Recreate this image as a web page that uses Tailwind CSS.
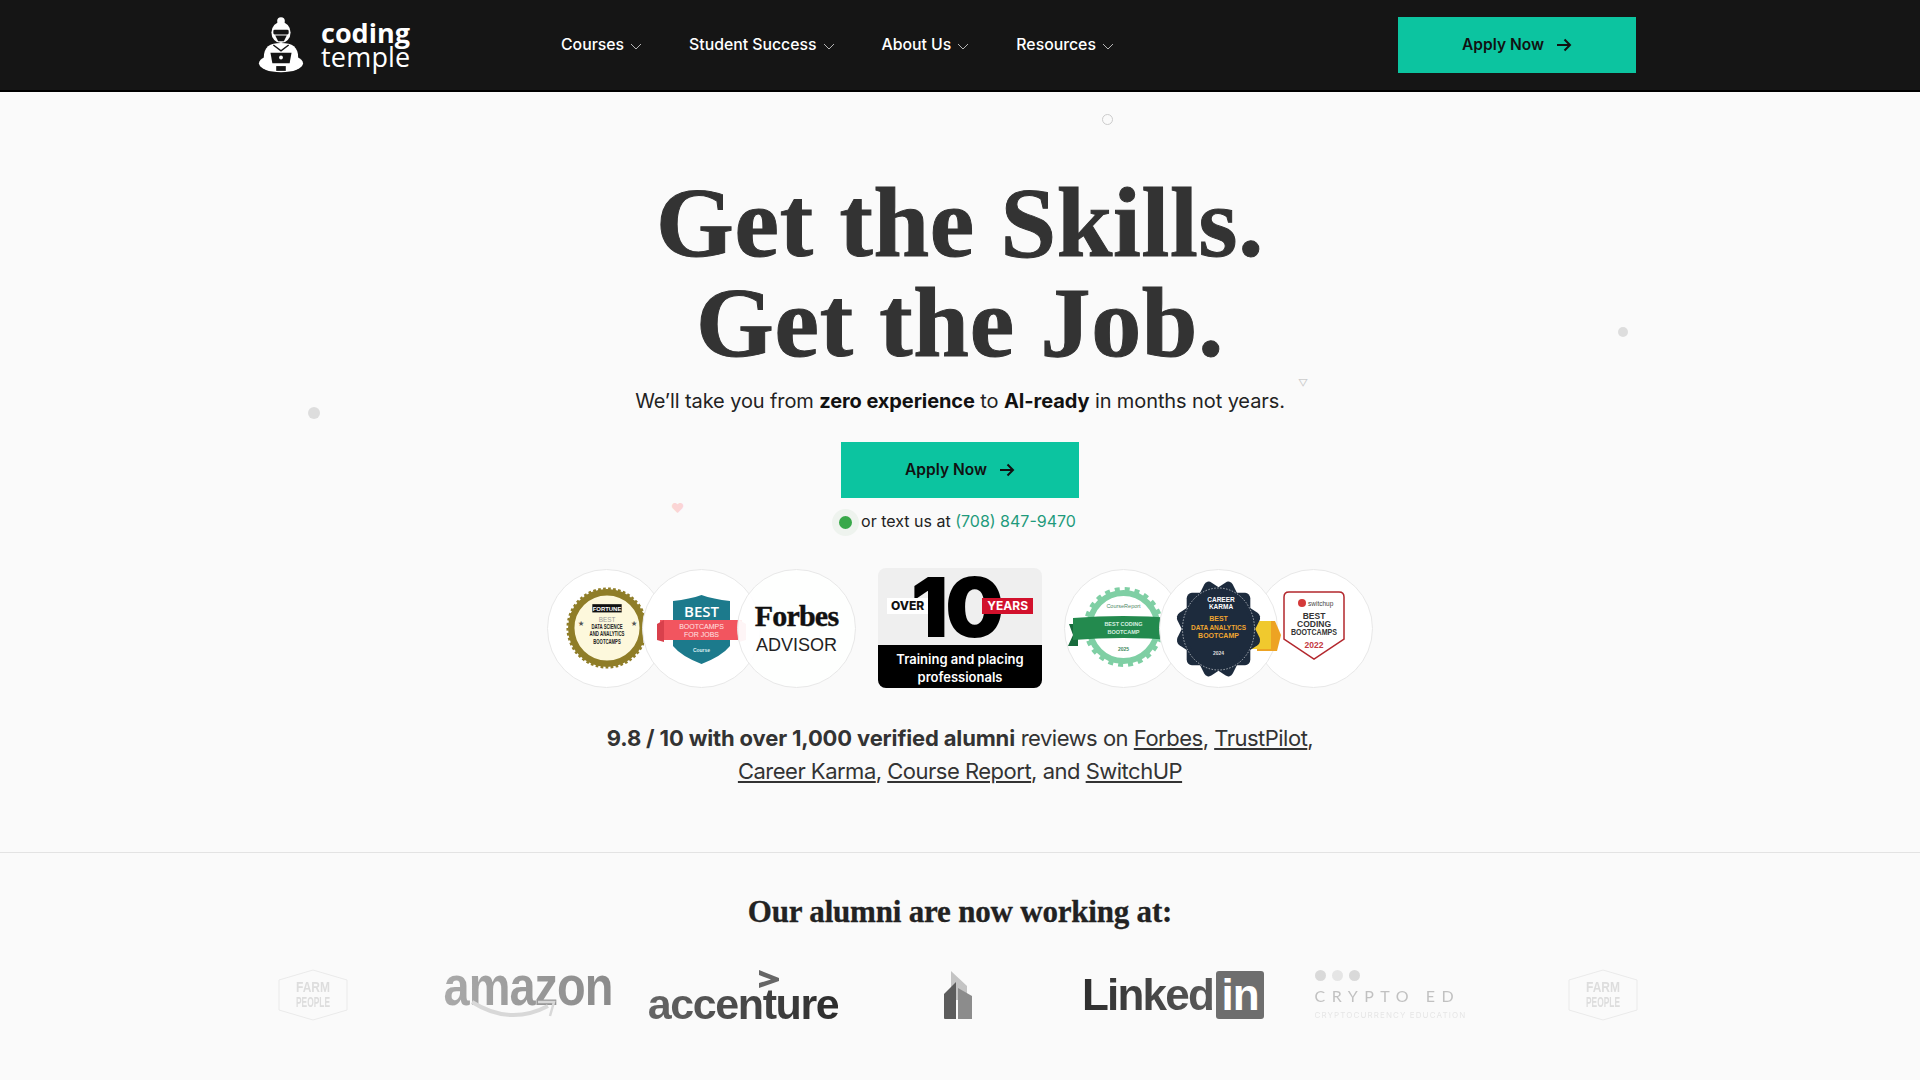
<!DOCTYPE html>
<html lang="en">
<head>
  <meta charset="UTF-8" />
  <meta name="viewport" content="width=device-width, initial-scale=1.0"/>
  <title>Coding Temple</title>
  <script src="https://cdn.jsdelivr.net/npm/@tailwindcss/browser@4"></script>
</head>
<body class="bg-[#fafafa] h-screen overflow-hidden relative font-[Inter,sans-serif] text-[#222]">

  <!-- floating dots -->
  <span class="absolute left-[1102px] top-[114px] size-[11px] rounded-full border border-[#ccc]"></span>
  <span class="absolute left-[1618px] top-[327px] size-[10px] rounded-full bg-[#ddd]"></span>
  <span class="absolute left-[308px] top-[407px] size-[12px] rounded-full bg-[#ddd]"></span>
  <span class="absolute left-[1298px] top-[378px] text-[10px] leading-[10px] text-[#ccc]">▽</span>
  <span class="absolute left-[671px] top-[502px] text-[13px] leading-[13px] text-[#fbd5d5]">♥</span>

  <header class="h-[92px] bg-[#151515] border-b-2 border-black">
    <div class="w-[1378px] h-full ml-[258px] flex items-center">
      <a href="#" class="flex items-center w-[303px]">
        <svg width="46" height="60" viewBox="0 0 48 60" class="-mt-[1px]">
          <circle cx="24" cy="5" r="4" fill="#fff"/>
          <ellipse cx="24" cy="17" rx="10" ry="11" fill="#fff"/>
          <path d="M6 44 C6 32 12 28 24 28 C36 28 42 32 42 44 L42 50 L6 50Z" fill="#fff"/>
          <ellipse cx="24" cy="49" rx="23" ry="9.5" fill="#fff"/>
          <rect x="16" y="14" width="16" height="5" rx="1.5" fill="#151515"/>
          <path d="M18 20 L30 20 L27 26 L21 26Z" fill="#151515"/>
          <path d="M16 30 L24 36 L32 30" fill="none" stroke="#151515" stroke-width="1.5"/>
          <path d="M13 38 H35 L33 49 H15Z" fill="#151515"/>
          <circle cx="24" cy="43" r="2" fill="#fff"/>
          <rect x="19" y="52" width="10" height="5" fill="#151515"/>
        </svg>
        <span class="ml-[17px] flex flex-col font-['Open_Sans',sans-serif] text-white text-[27px] leading-[24px] -mt-[1px]">
          <span class="font-bold">coding</span>
          <span class="tracking-[0.2px]">temple</span>
        </span>
      </a>
      <nav class="flex items-center gap-[47px] text-white text-[15.8px] font-medium">
        <a href="#" class="flex items-center gap-[6px]">Courses
          <svg width="12" height="7" viewBox="0 0 12 7" fill="none" stroke="#ddd" stroke-width=".8" class="mt-[2px]"><path d="M1 1l5 5 5-5"/></svg></a>
        <a href="#" class="flex items-center gap-[6px]">Student Success
          <svg width="12" height="7" viewBox="0 0 12 7" fill="none" stroke="#ddd" stroke-width=".8" class="mt-[2px]"><path d="M1 1l5 5 5-5"/></svg></a>
        <a href="#" class="flex items-center gap-[6px]">About Us
          <svg width="12" height="7" viewBox="0 0 12 7" fill="none" stroke="#ddd" stroke-width=".8" class="mt-[2px]"><path d="M1 1l5 5 5-5"/></svg></a>
        <a href="#" class="flex items-center gap-[6px]">Resources
          <svg width="12" height="7" viewBox="0 0 12 7" fill="none" stroke="#ddd" stroke-width=".8" class="mt-[2px]"><path d="M1 1l5 5 5-5"/></svg></a>
      </nav>
      <a href="#" class="ml-auto w-[238px] h-[56px] bg-[#0cc4a0] text-[#111] font-semibold text-[15.5px] flex items-center justify-center gap-[12px]">Apply Now
        <svg width="16" height="14" viewBox="0 0 16 14" fill="none" stroke="#111" stroke-width="2"><path d="M1 7h13M8.500 1.500 14 7l-5.500 5.500"/></svg>
      </a>
    </div>
  </header>

  <main class="flex flex-col items-center">
    <h1 class="mt-[81px] text-center font-['Liberation_Serif',serif] font-bold text-[#333] text-[100px] leading-[100px] tracking-[0.7px] [-webkit-text-stroke:1px_#333]">Get the Skills.<br>Get the Job.</h1>
    <p class="mt-[13px] text-[20px] leading-[30px] tracking-[-0.1px] text-[#222]">We’ll take you from <b class="font-bold text-[#111]">zero experience</b> to <b class="font-bold text-[#111]">AI-ready</b> in months not years.</p>

    <a href="#" class="mt-[26px] w-[238px] h-[56px] bg-[#0cc4a0] text-[#111] font-semibold text-[15.5px] flex items-center justify-center gap-[12px]">Apply Now
      <svg width="16" height="14" viewBox="0 0 16 14" fill="none" stroke="#111" stroke-width="2"><path d="M1 7h13M8.500 1.500 14 7l-5.500 5.500"/></svg>
    </a>

    <p class="mt-[8px] -ml-[12px] text-[16px] leading-[24px] flex items-center text-[#222]">
      <span class="size-[27px] rounded-full border-[7px] border-[#eef3ee] bg-[#38a84a] mr-[2px] mt-[3px]"></span>
      or text us at&nbsp;<a href="#" class="text-[#1f9a7c]">(708) 847-9470</a>
    </p>

    <!-- awards row -->
    <div class="mt-[32px] flex items-center h-[120px]">
      <div class="flex">
        <div class="size-[119px] rounded-full bg-white border border-[#e8e8e8] flex items-center justify-center relative z-0">
          <svg width="88" height="88" viewBox="0 0 96 96">
            <circle cx="48" cy="48" r="39" fill="#fdf8dc" stroke="#8f7d27" stroke-width="7"/>
            <circle cx="48" cy="48" r="43" fill="none" stroke="#8f7d27" stroke-width="2.500" stroke-dasharray="3 2.500"/>
            <rect x="32" y="22" width="32" height="9" fill="#111"/>
            <text x="48" y="29" text-anchor="middle" font-family="Liberation Sans" font-weight="700" font-size="6.500" fill="#fff">FORTUNE</text>
            <text x="48" y="41" text-anchor="middle" font-family="Liberation Sans" font-size="7" fill="#999">BEST</text>
            <g font-family="Liberation Sans" font-weight="700" font-size="8" fill="#222" text-anchor="middle">
              <text x="48" y="49" textLength="34" lengthAdjust="spacingAndGlyphs">DATA SCIENCE</text>
              <text x="48" y="57" textLength="38" lengthAdjust="spacingAndGlyphs">AND ANALYTICS</text>
              <text x="48" y="65" textLength="30" lengthAdjust="spacingAndGlyphs">BOOTCAMPS</text>
            </g>
            <text x="16" y="46" font-size="7" fill="#555">★</text><text x="74" y="46" font-size="7" fill="#555">★</text>
          </svg>
        </div>
        <div class="size-[119px] rounded-full bg-white border border-[#e8e8e8] -ml-[24px] flex items-center justify-center relative z-10">
          <svg width="119" height="96" viewBox="0 0 119 96" class="overflow-visible">
            <path d="M31 21 Q48 19 59.500 15 Q71 19 88 21 V66 Q80 76 59.500 84 Q39 76 31 66Z" fill="#1c7a8c"/>
            <text x="59.500" y="37" text-anchor="middle" font-family="Open Sans" font-weight="600" font-size="15" fill="#fff">BEST</text>
            <path d="M18 40 H100 V60 H18Z" fill="#f2555f"/>
            <path d="M15 44 L22 40 V62 L15 60Z" fill="#d9404c"/>
            <path d="M104 44 L97 40 V62 L104 60Z" fill="#f49aa0"/>
            <g font-family="Liberation Sans" font-size="7" fill="#ffe4e4" text-anchor="middle">
              <text x="59.500" y="49">BOOTCAMPS</text><text x="59.500" y="57">FOR JOBS</text>
            </g>
            <text x="59.500" y="72" text-anchor="middle" font-family="Liberation Sans" font-size="5" font-weight="700" fill="#d9eef2">Course</text>
          </svg>
        </div>
        <div class="size-[119px] rounded-full bg-white/90 border border-[#e8e8e8] -ml-[24px] flex flex-col items-center justify-center relative z-20">
          <span class="font-['Liberation_Serif',serif] font-bold text-[30px] leading-[32px] tracking-[-0.8px] text-[#111] [-webkit-text-stroke:0.4px_#111]">Forbes</span>
          <span class="text-[18px] leading-[24px] text-[#222] font-['Liberation_Sans',sans-serif] mt-[1px]">ADVISOR</span>
        </div>
      </div>

      <div class="w-[164px] h-[120px] mx-[22px] rounded-[8px] overflow-hidden flex flex-col bg-[#efefef]">
        <div class="h-[77px] relative flex items-center justify-center overflow-hidden">
          <span class="font-black text-[83px] leading-[60px] tracking-[-3px] text-black ml-[-8px]">10</span>
          <span class="absolute left-[9px] top-[30px] bg-white px-[4px] text-[12px] leading-[16px] font-extrabold text-[#111]">OVER</span>
          <span class="absolute right-[9px] top-[30px] bg-[#d2112c] px-[5px] text-[12px] leading-[16px] font-bold text-white">YEARS</span>
        </div>
        <div class="flex-1 bg-black text-white text-center text-[13px] leading-[18px] font-semibold pt-[5px]">Training and placing<br>professionals</div>
      </div>

      <div class="flex">
        <div class="size-[119px] rounded-full bg-white border border-[#e8e8e8] flex items-center justify-center relative z-0">
          <svg width="119" height="96" viewBox="0 0 119 96" class="overflow-visible">
            <circle cx="59.500" cy="47" r="34" fill="#fff" stroke="#7fcfa4" stroke-width="6"/>
            <circle cx="59.500" cy="47" r="38" fill="none" stroke="#7fcfa4" stroke-width="4" stroke-dasharray="5 5"/>
            <text x="59.500" y="28" text-anchor="middle" font-family="Liberation Sans" font-size="5.500" fill="#4f8a68">CourseReport</text>
            <path d="M5 44 H14 V66 H4 L9 55Z" fill="#176a3c"/><path d="M114 44 H105 V66 H115 L110 55Z" fill="#176a3c"/>
            <path d="M9 38 Q59 34 110 38 V60 Q59 56 9 60Z" fill="#238a4e"/>
            <g font-family="Liberation Sans" font-weight="700" font-size="5.500" fill="#d8f0e0" text-anchor="middle">
              <text x="59.500" y="46">BEST CODING</text><text x="59.500" y="54">BOOTCAMP</text>
            </g>
            <text x="59.500" y="71" text-anchor="middle" font-family="Liberation Sans" font-weight="700" font-size="5" fill="#3f8a5e">2025</text>
          </svg>
        </div>
        <div class="size-[119px] rounded-full bg-white border border-[#e8e8e8] -ml-[24px] flex items-center justify-center relative z-20">
          <svg width="119" height="106" viewBox="0 0 119 106" class="overflow-visible">
            <path d="M98 46 H116 L122 60 L118 76 H98Z" fill="#eda323"/>
            <rect x="92" y="46" width="20" height="28" fill="#f0c92e"/>
            <g fill="#1d2b3d" transform="translate(59.500 54) scale(.86 .98)">
              <rect x="-37" y="-37" width="74" height="74" rx="6"/>
              <rect x="-37" y="-37" width="74" height="74" rx="6" transform="rotate(30)"/>
              <rect x="-37" y="-37" width="74" height="74" rx="6" transform="rotate(60)"/>
            </g>
            <ellipse cx="59.500" cy="54" rx="36" ry="41" fill="none" stroke="#fff" stroke-width=".6" stroke-dasharray="1.500 1.500"/>
            <g font-family="Liberation Sans" font-weight="700" text-anchor="middle">
              <text x="62" y="27" font-size="6.500" fill="#fff">CAREER</text>
              <text x="62" y="34" font-size="6.500" fill="#fff">KARMA</text>
              <g font-size="7" fill="#f0a630">
                <text x="59.500" y="46">BEST</text><text x="59.500" y="55" font-size="6.500">DATA ANALYTICS</text><text x="59.500" y="63">BOOTCAMP</text>
              </g>
              <text x="59.500" y="80" font-size="5" fill="#ddd">2024</text>
            </g>
          </svg>
        </div>
        <div class="size-[119px] rounded-full bg-white border border-[#e8e8e8] -ml-[24px] flex items-center justify-center relative z-10">
          <svg width="70" height="78" viewBox="0 0 70 78">
            <path d="M10 3 H60 Q65 3 65 8 V50 L35 70 L5 50 V8 Q5 3 10 3Z" fill="#fff" stroke="#b3272d" stroke-width="1.500"/>
            <circle cx="23" cy="14" r="4" fill="#d43a3a"/>
            <text x="29" y="16.500" font-family="Liberation Sans" font-size="6.500" fill="#444">switchup</text>
            <g font-family="Liberation Sans" font-weight="700" font-size="8.500" fill="#333" text-anchor="middle">
              <text x="35" y="30">BEST</text><text x="35" y="38">CODING</text><text x="35" y="46" textLength="46" lengthAdjust="spacingAndGlyphs">BOOTCAMPS</text>
            </g>
            <text x="35" y="59" text-anchor="middle" font-family="Liberation Sans" font-weight="700" font-size="8.500" fill="#c43a3f">2022</text>
          </svg>
        </div>
      </div>
    </div>

    <p class="mt-[34px] text-center text-[22px] leading-[33px] text-[#333] tracking-[-0.5px]">
      <b class="font-bold tracking-[-0.15px]">9.8 / 10 with over 1,000 verified alumni</b> reviews on <a href="#" class="underline">Forbes</a>, <a href="#" class="underline">TrustPilot</a>,<br>
      <a href="#" class="underline">Career Karma</a>, <a href="#" class="underline">Course Report</a>, and <a href="#" class="underline">SwitchUP</a>
    </p>
  </main>

  <section class="mt-[64px] border-t border-[#e3e3e3] flex flex-col items-center">
    <h2 class="mt-[38px] font-['Liberation_Serif',serif] font-bold text-[#222] text-[31px] leading-[42px] tracking-[-0.2px] [-webkit-text-stroke:0.3px_#222]">Our alumni are now working at:</h2>

    <div class="mt-[32px] w-[1378px] h-[60px] -ml-[4px] overflow-hidden flex justify-center items-center">
      <div class="w-[215px] shrink-0 flex justify-center opacity-25">
        <svg width="72" height="52" viewBox="0 0 72 52">
          <path d="M36 1 L70 11 V41 L36 51 L2 41 V11Z" fill="none" stroke="#bbb"/>
          <g font-family="Liberation Sans" font-weight="700" font-size="14" fill="#888" text-anchor="middle">
            <text x="36" y="23" textLength="34" lengthAdjust="spacingAndGlyphs">FARM</text><text x="36" y="38" textLength="34" lengthAdjust="spacingAndGlyphs">PEOPLE</text>
          </g>
        </svg>
      </div>
      <div class="w-[215px] shrink-0 flex flex-col items-center relative h-[60px]">
        <span class="-mt-[10px] font-['Liberation_Sans',sans-serif] font-bold text-[47px] leading-[52px] tracking-[-1px] scale-y-[1.2] origin-top bg-linear-to-r from-[#aaa] to-[#8a8a8a] bg-clip-text text-transparent">amazon</span>
        <svg width="87" height="20" viewBox="0 0 87 20" class="absolute top-[35px] left-[49px]">
          <path d="M2 2 Q40 26 78 6" fill="none" stroke="#d8d8d8" stroke-width="4"/><path d="M68 2 L84 2 L80 16" fill="none" stroke="#d8d8d8" stroke-width="2.500"/>
        </svg>
      </div>
      <div class="w-[215px] shrink-0 flex flex-col items-center relative h-[60px]">
        <span class="absolute top-[5px] left-[123px] text-[0px]">
          <svg width="20" height="18" viewBox="0 0 20 18"><path d="M0 0 L20 8 V11 L0 18 V13 L12 9.500 L0 5Z" fill="#666"/></svg>
        </span>
        <span class="font-['Liberation_Sans',sans-serif] font-bold text-[43px] leading-[46px] mt-[16px] tracking-[-1.4px] bg-linear-to-r from-[#666] to-[#2c2c2c] bg-clip-text text-transparent">accenture</span>
      </div>
      <div class="w-[215px] shrink-0 flex justify-center">
        <svg width="28" height="50" viewBox="0 0 28 50">
          <path d="M7 1 L23 16 V30 H7Z" fill="#c4c4c4"/>
          <path d="M0 24 L12 12 V49 H1 Q0 49 0 48Z" fill="#5c5c5c"/>
          <path d="M14 18 L28 26 V49 H14Z" fill="#8c8c8c"/>
        </svg>
      </div>
      <div class="w-[215px] shrink-0 flex justify-center items-center">
        <span class="font-['Liberation_Sans',sans-serif] font-bold text-[44px] leading-[48px] tracking-[-1.800px] bg-linear-to-r from-[#2e2e2e] to-[#5a5a5a] bg-clip-text text-transparent">Linked</span>
        <span class="ml-[3px] w-[48px] h-[48px] rounded-[3px] bg-[#6e6e6e] text-white font-['Liberation_Sans',sans-serif] font-bold text-[44px] leading-[48px] tracking-[-1px] text-center">in</span>
      </div>
      <div class="w-[215px] shrink-0 flex flex-col items-start pl-[34px] opacity-70">
        <div class="flex gap-[6px]"><span class="size-[11px] rounded-full bg-[#ccc]"></span><span class="size-[11px] rounded-full bg-[#ddd]"></span><span class="size-[11px] rounded-full bg-[#ccc]"></span></div>
        <span class="mt-[5px] font-[Lato,sans-serif] text-[16px] leading-[20px] tracking-[6.500px] text-[#aaa] whitespace-nowrap">CRYPTO ED</span>
        <span class="mt-[4px] text-[8px] leading-[10px] tracking-[1.100px] text-[#ddd] whitespace-nowrap">CRYPTOCURRENCY EDUCATION</span>
      </div>
      <div class="w-[215px] shrink-0 flex justify-center opacity-25">
        <svg width="72" height="52" viewBox="0 0 72 52">
          <path d="M36 1 L70 11 V41 L36 51 L2 41 V11Z" fill="none" stroke="#bbb"/>
          <g font-family="Liberation Sans" font-weight="700" font-size="14" fill="#888" text-anchor="middle">
            <text x="36" y="23" textLength="34" lengthAdjust="spacingAndGlyphs">FARM</text><text x="36" y="38" textLength="34" lengthAdjust="spacingAndGlyphs">PEOPLE</text>
          </g>
        </svg>
      </div>
    </div>
  </section>
</body>
</html>
